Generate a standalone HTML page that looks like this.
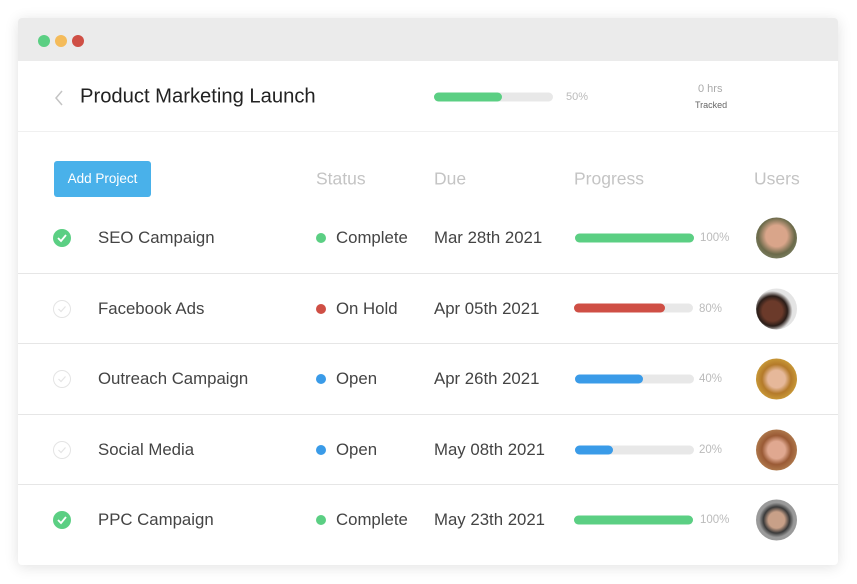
<!DOCTYPE html><html><head><style>
*{margin:0;padding:0;box-sizing:border-box}
body{width:857px;height:584px;background:#fff;font-family:"Liberation Sans",sans-serif;position:relative;overflow:hidden}
.card{position:absolute;left:18px;top:18px;width:820px;height:547px;background:#fff;box-shadow:0 2px 14px rgba(0,0,0,.12);border-radius:4px;overflow:hidden}
.tb{height:43px;background:#ebebeb}
.d{position:absolute;top:17px;width:12px;height:12px;border-radius:50%}
.a{position:absolute}
.t{position:absolute;transform:translateY(-50%);white-space:nowrap}
.r{font-size:16.8px;color:#444}
.h{font-size:17.5px;color:#c4c4c4}
.line{position:absolute;left:0;width:820px;height:1px;background:#e6e6e6}
.bar{position:absolute;height:9px;border-radius:5px;background:#e8e8e8;transform:translateY(-50%)}
.bar i{display:block;height:9px;border-radius:5px}
.av{position:absolute;width:41px;height:41px;border-radius:50%;transform:translateY(-50%)}
</style></head><body>
<div class="card">
<div class="tb"></div>
<div class="d" style="left:20px;background:#5bcf83"></div>
<div class="d" style="left:37px;background:#f4bb5a"></div>
<div class="d" style="left:54px;background:#cf4f45"></div>
<svg class="a" style="left:36px;top:72px" width="10" height="16"><path d="M8 1L2 8l6 7" stroke="#c4c4c4" stroke-width="1.5" fill="none"/></svg>
<div class="t" style="left:62px;top:79px;font-size:20.2px;color:#222">Product Marketing Launch</div>
<div class="bar" style="left:416px;top:79px;width:119px"><i style="width:68px;background:#5bcf83"></i></div>
<div class="t" style="left:548px;top:79px;font-size:11px;color:#bbb">50%</div>
<div class="t" style="left:680px;top:71px;font-size:11px;color:#aaa">0 hrs</div>
<div class="t" style="left:677px;top:87px;font-size:9px;color:#666">Tracked</div>
<div class="line" style="top:113px;background:#f0f0f0"></div>
<div class="a" style="left:36px;top:143px;width:97px;height:36px;background:#49b1ea;border-radius:3px;color:#fff;font-size:13.5px;line-height:36px;text-align:center">Add Project</div>
<div class="t h" style="left:298px;top:161px">Status</div>
<div class="t h" style="left:416px;top:161px">Due</div>
<div class="t h" style="left:556px;top:161px">Progress</div>
<div class="t h" style="left:736px;top:161px">Users</div>
<div class="line" style="top:255px"></div><div class="line" style="top:325px"></div><div class="line" style="top:396px"></div><div class="line" style="top:466px"></div>

<svg class="a" style="left:35px;top:211px" width="18" height="18"><circle cx="9" cy="9" r="9" fill="#5bcf83"/><path d="M5 9l3 3 5-6" stroke="#fff" stroke-width="1.8" fill="none"/></svg>
<svg class="a" style="left:35px;top:282px" width="18" height="18"><circle cx="9" cy="9" r="8.5" fill="none" stroke="#e4e4e4"/><path d="M5.5 9l2.5 2.5 4.5-5" stroke="#e4e4e4" stroke-width="1.2" fill="none"/></svg>
<svg class="a" style="left:35px;top:352px" width="18" height="18"><circle cx="9" cy="9" r="8.5" fill="none" stroke="#e4e4e4"/><path d="M5.5 9l2.5 2.5 4.5-5" stroke="#e4e4e4" stroke-width="1.2" fill="none"/></svg>
<svg class="a" style="left:35px;top:423px" width="18" height="18"><circle cx="9" cy="9" r="8.5" fill="none" stroke="#e4e4e4"/><path d="M5.5 9l2.5 2.5 4.5-5" stroke="#e4e4e4" stroke-width="1.2" fill="none"/></svg>
<svg class="a" style="left:35px;top:493px" width="18" height="18"><circle cx="9" cy="9" r="9" fill="#5bcf83"/><path d="M5 9l3 3 5-6" stroke="#fff" stroke-width="1.8" fill="none"/></svg>

<div class="t r" style="left:80px;top:220px">SEO Campaign</div>
<div class="t r" style="left:80px;top:291px">Facebook Ads</div>
<div class="t r" style="left:80px;top:361px">Outreach Campaign</div>
<div class="t r" style="left:80px;top:432px">Social Media</div>
<div class="t r" style="left:80px;top:502px">PPC Campaign</div>

<div class="a" style="left:298px;top:215px;width:10px;height:10px;border-radius:50%;background:#5bcf83"></div>
<div class="a" style="left:298px;top:286px;width:10px;height:10px;border-radius:50%;background:#cf4f45"></div>
<div class="a" style="left:298px;top:356px;width:10px;height:10px;border-radius:50%;background:#3a9be8"></div>
<div class="a" style="left:298px;top:427px;width:10px;height:10px;border-radius:50%;background:#3a9be8"></div>
<div class="a" style="left:298px;top:497px;width:10px;height:10px;border-radius:50%;background:#5bcf83"></div>
<div class="t r" style="left:318px;top:220px">Complete</div>
<div class="t r" style="left:318px;top:291px">On Hold</div>
<div class="t r" style="left:318px;top:361px">Open</div>
<div class="t r" style="left:318px;top:432px">Open</div>
<div class="t r" style="left:318px;top:502px">Complete</div>

<div class="t r" style="left:416px;top:220px">Mar 28th 2021</div>
<div class="t r" style="left:416px;top:291px">Apr 05th 2021</div>
<div class="t r" style="left:416px;top:361px">Apr 26th 2021</div>
<div class="t r" style="left:416px;top:432px">May 08th 2021</div>
<div class="t r" style="left:416px;top:502px">May 23th 2021</div>

<div class="bar" style="left:557px;top:220px;width:119px"><i style="width:119px;background:#5bcf83"></i></div>
<div class="bar" style="left:556px;top:290px;width:119px"><i style="width:91px;background:#cf4f45"></i></div>
<div class="bar" style="left:557px;top:361px;width:119px"><i style="width:68px;background:#3a9be8"></i></div>
<div class="bar" style="left:557px;top:432px;width:119px"><i style="width:38px;background:#3a9be8"></i></div>
<div class="bar" style="left:556px;top:502px;width:119px"><i style="width:119px;background:#5bcf83"></i></div>
<div class="t" style="left:682px;top:220px;font-size:11.5px;color:#bbb">100%</div>
<div class="t" style="left:681px;top:291px;font-size:11.5px;color:#bbb">80%</div>
<div class="t" style="left:681px;top:361px;font-size:11.5px;color:#bbb">40%</div>
<div class="t" style="left:681px;top:432px;font-size:11.5px;color:#bbb">20%</div>
<div class="t" style="left:682px;top:502px;font-size:11.5px;color:#bbb">100%</div>

<div class="av" style="left:738px;top:220px;background:radial-gradient(circle at 50% 45%,#d9a58a 0 35%,#6b6a4a 60%,#8f9b80)"></div>
<div class="av" style="left:738px;top:291px;background:radial-gradient(circle at 40% 55%,#6b3a2a 0 30%,#2a1d18 45%,#e4e4e4 60%)"></div>
<div class="av" style="left:738px;top:361px;background:radial-gradient(circle at 50% 50%,#e6b89a 0 30%,#b47a2a 50%,#e3c14a)"></div>
<div class="av" style="left:738px;top:432px;background:radial-gradient(circle at 50% 50%,#e0a890 0 30%,#9a5a35 50%,#c9a06a)"></div>
<div class="av" style="left:738px;top:502px;background:radial-gradient(circle at 50% 50%,#c8a088 0 28%,#3a3a3a 45%,#9a9a9a 60%)"></div>
</div>
</body></html>
